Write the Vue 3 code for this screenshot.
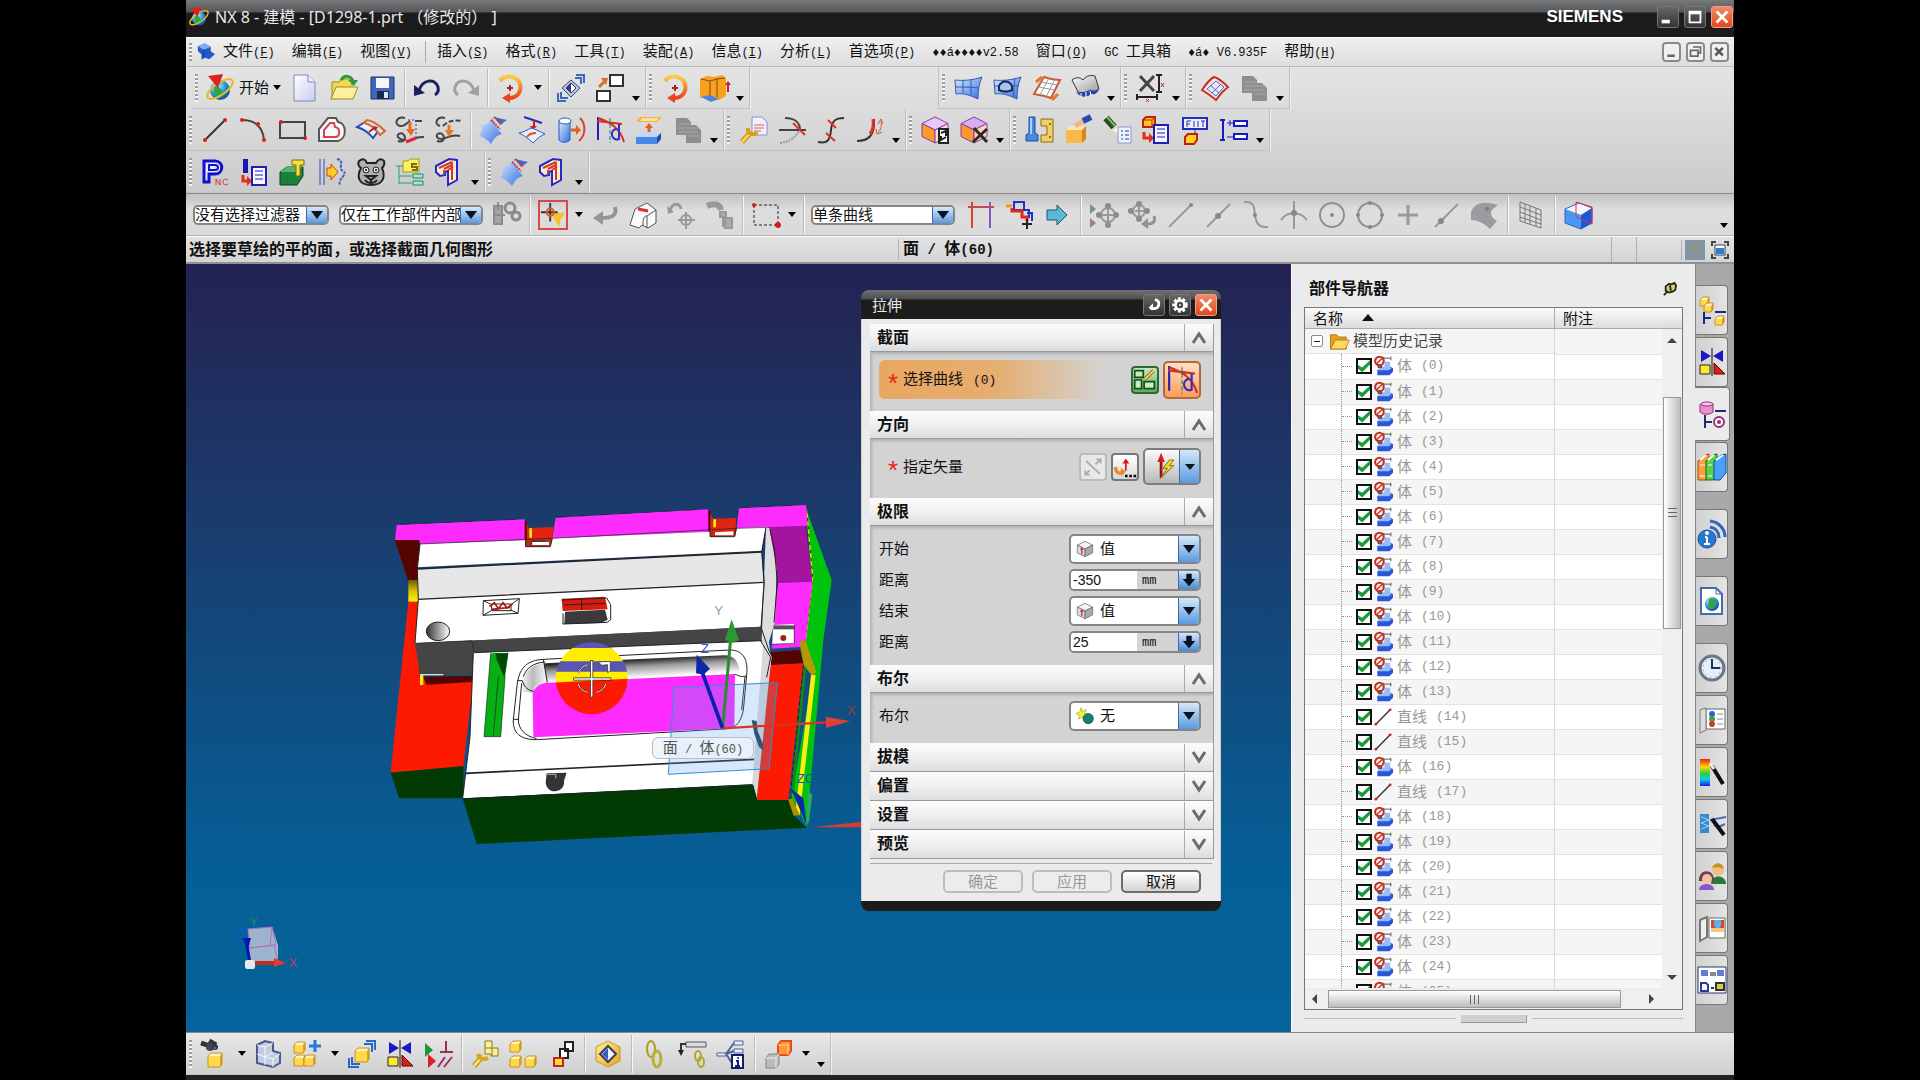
<template>
  <div class="screen">
    <svg class="defs" width="0" height="0" aria-hidden="true">
      <defs>
        <linearGradient id="gBlue" x1="0" y1="0" x2="1" y2="1"><stop offset="0" stop-color="#dcecff" /><stop offset="1" stop-color="#2f6fe0" /></linearGradient>
        <linearGradient id="gOrange" x1="0" y1="0" x2="0" y2="1"><stop offset="0" stop-color="#f8cf4a" /><stop offset="1" stop-color="#e8431c" /></linearGradient>
        <linearGradient id="gGold" x1="0" y1="0" x2="1" y2="1"><stop offset="0" stop-color="#fff0a0" /><stop offset="1" stop-color="#e8a41c" /></linearGradient>
        <linearGradient id="gGrey" x1="0" y1="0" x2="1" y2="1"><stop offset="0" stop-color="#fff" /><stop offset="1" stop-color="#9a9a9a" /></linearGradient>
        <linearGradient id="gDoc" x1="0" y1="0" x2="1" y2="1"><stop offset="0" stop-color="#fff" /><stop offset="1" stop-color="#c9cdf2" /></linearGradient>
        <linearGradient id="gRain" x1="0" y1="0" x2="0" y2="1"><stop offset="0" stop-color="#f02010" /><stop offset=".3" stop-color="#ffd800" /><stop offset=".55" stop-color="#20d040" /><stop offset=".75" stop-color="#18c8f0" /><stop offset="1" stop-color="#1020e0" /></linearGradient>
        <linearGradient id="gPocket" gradientUnits="userSpaceOnUse" x1="740" y1="495" x2="744" y2="566"><stop offset="0" stop-color="#888" /><stop offset=".2" stop-color="#222" /><stop offset=".5" stop-color="#999" /><stop offset="1" stop-color="#fff" /></linearGradient>
        <linearGradient id="gSide" x1="0" y1="0" x2="1" y2="0"><stop offset="0" stop-color="#eee" /><stop offset=".4" stop-color="#bbb" /><stop offset="1" stop-color="#fff" /></linearGradient>
        <linearGradient id="gHole" x1="0" y1="0" x2="1" y2="0"><stop offset="0" stop-color="#333" /><stop offset="1" stop-color="#fff" /></linearGradient>
        <linearGradient id="gYellow" x1="0" y1="0" x2="0" y2="1"><stop offset="0" stop-color="#6a5a00" /><stop offset=".5" stop-color="#d8c000" /><stop offset="1" stop-color="#fff200" /></linearGradient>
        <radialGradient id="gGlobe" cx=".35" cy=".3" r=".8"><stop offset="0" stop-color="#c8f6ff" /><stop offset=".5" stop-color="#2b9bd8" /><stop offset="1" stop-color="#0a3f86" /></radialGradient>
      </defs>
    </svg>

    <div class="window">
      <header class="titlebar">
        <svg class="ico20" viewBox="0 0 28 28" v-html="icons.nx"></svg>
        <h1>NX 8 - 建模 - [D1298-1.prt （修改的） ]</h1>
        <span class="brand">SIEMENS</span>
        <div class="win-btns">
          <button class="win-btn" aria-label="Minimize"><svg viewBox="0 0 22 22"><path d="M4 14h9v4H4z" fill="#fff" /></svg></button>
          <button class="win-btn" aria-label="Maximize"><svg viewBox="0 0 22 22"><path d="M4 4h14v14H4zM6 8h10v8H6z" fill="#fff" fill-rule="evenodd" /></svg></button>
          <button class="win-btn close" aria-label="Close"><svg viewBox="0 0 22 22"><path d="M5 5l12 12M17 5L5 17" stroke="#fff" stroke-width="3" /></svg></button>
        </div>
      </header>

      <nav class="menubar">
        <i class="grip"></i>
        <svg class="ico20" viewBox="0 0 28 28" v-html="icons.part"></svg>
        <ul>
          <li v-for="m in menus" :key="m.text" :class="{ 'menu-sep': m.sep }">
            <a href="#" @click.prevent><span :class="{ latin: m.mono }">{{ m.text }}</span><span v-if="m.key" class="latin">(<u>{{ m.key }}</u>)</span><span v-if="m.tail">{{ m.tail }}</span></a>
          </li>
        </ul>
        <div class="doc-btns">
          <button aria-label="Minimize document"><svg viewBox="0 0 18 18"><path d="M4 12h9v3H4z" fill="#666" /></svg></button>
          <button aria-label="Restore document"><svg viewBox="0 0 18 18"><path d="M6 3h9v7h-3M3 7h9v7H3z" fill="none" stroke="#666" stroke-width="2" /></svg></button>
          <button aria-label="Close document"><svg viewBox="0 0 18 18"><path d="M4 4l9 9M13 4l-9 9" stroke="#555" stroke-width="3" /></svg></button>
        </div>
      </nav>

      <div class="toolbars">
        <div v-for="(row, r) in rows" :key="r" class="tool-row" :class="'row' + r">
          <div v-for="(group, g) in row" :key="g" class="tool-group">
            <i class="grip"></i>
            <template v-for="(t, k) in group" :key="k">
              <i v-if="t === '|'" class="sep"></i>
              <button v-else-if="t === 'v'" class="drop" aria-label="More"></button>
              <button v-else-if="t === 'nx'" class="start"><svg viewBox="0 0 28 28" v-html="icons.nx"></svg>开始<i class="tri"></i></button>
              <button v-else class="tool" :aria-label="t"><svg viewBox="0 0 28 28" v-html="icons[t]"></svg></button>
            </template>
            <button class="drop low" aria-label="Toolbar options"></button>
          </div>
        </div>
      </div>

      <div class="selbar">
        <label class="combo c1"><select aria-label="选择过滤器"><option>没有选择过滤器</option></select><i class="arrow"></i></label>
        <label class="combo c2"><select aria-label="选择范围"><option>仅在工作部件内部</option></select><i class="arrow"></i></label>
        <template v-for="(t, k) in selection" :key="k">
          <i v-if="t === '|'" class="sep"></i>
          <button v-else-if="t === 'v'" class="drop" aria-label="More"></button>
          <label v-else-if="t === 'curve'" class="combo c2 c3"><select aria-label="曲线规则"><option>单条曲线</option></select><i class="arrow"></i></label>
          <button v-else class="tool" :class="{ on: t === 'snap' }" :aria-label="t"><svg viewBox="0 0 28 28" v-html="icons[t]"></svg></button>
        </template>
        <button class="drop low last" aria-label="Toolbar options"></button>
      </div>

      <div class="cue">
        <p class="prompt">选择要草绘的平的面，或选择截面几何图形</p>
        <p class="status">面<span class="latin"> / </span>体<span class="latin">(60)</span></p>
        <i class="cell"></i>
        <i class="cell wide"></i>
        <div class="cue-btns">
          <button aria-label="Display"><svg viewBox="0 0 20 20"><rect width="20" height="20" fill="#8394a4" /><path d="M3 5l5 3 2-3 3 4 3-3M5 11h4l3 3 3-5" stroke="#98907a" stroke-width="2" fill="none" /></svg></button>
          <button aria-label="Full screen"><svg viewBox="0 0 20 20"><path d="M2 6V2h4M14 2h4v4M18 14v4h-4M6 18H2v-4" stroke="#444" stroke-width="2" fill="none" /><rect x="5" y="5" width="10" height="10" fill="#fff" stroke="#345" /><rect x="6" y="8" width="8" height="6" fill="#2f7fd0" /></svg></button>
        </div>
      </div>

      <main class="work">
        <section class="viewport">
          <svg class="model" viewBox="0 0 1470 1110" v-html="modelArt"></svg>
          <div class="hint">面<span class="latin"> / </span>体<span class="latin">(60)</span></div>
          <svg class="triad" viewBox="0 0 64 54">
            <path d="M12 12l24-2 6 18v18H14z" fill="#b9c3d6" opacity=".85" />
            <path d="M12 12l24-2 4 18-26 3zM14 31l24-3 4 17M36 10l-2 20" fill="none" stroke="#b070b8" />
            <path d="M10 24l4 22" stroke="#0018b0" stroke-width="3" /><path d="M6 21l9 0-3 10z" fill="#0018b0" />
            <path d="M14 46h28" stroke="#c42a24" stroke-width="4" /><path d="M38 41l12 5-12 4z" fill="#e03a30" />
            <rect x="9" y="43" width="10" height="9" rx="2" fill="#e8e8e8" />
            <text x="53" y="50" font-size="12" fill="#c33c4c">X</text><text x="1" y="20" font-size="12" fill="#0a58d8">Z</text><text x="14" y="9" font-size="11" fill="#2e8a60">Y</text>
          </svg>

          <form class="dialog" @submit.prevent>
            <div class="dlg-title">
              <h2>拉伸</h2>
              <button type="button" class="win-btn" aria-label="Reset"><svg viewBox="0 0 22 22"><path d="M12 5c6 1 6 9-1 10H7" fill="none" stroke="#fff" stroke-width="3" /><path d="M5 14l5-5v8z" fill="#fff" /></svg></button>
              <button type="button" class="win-btn" aria-label="Options"><svg viewBox="0 0 22 22"><circle cx="11" cy="11" r="7" fill="none" stroke="#fff" stroke-width="3" stroke-dasharray="3 2" /><circle cx="11" cy="11" r="5" fill="none" stroke="#fff" stroke-width="3" /><circle cx="11" cy="11" r="1" fill="#fff" /></svg></button>
              <button type="button" class="win-btn close" aria-label="Close"><svg viewBox="0 0 22 22"><path d="M5 5l12 12M17 5L5 17" stroke="#fff" stroke-width="3" /></svg></button>
            </div>
            <div class="dlg-body">
              <div class="sections">
                <section v-for="s in sections" :key="s.title" :class="{ closed: !s.rows }">
                  <h3><button type="button">{{ s.title }}<span class="fold"><svg viewBox="0 0 16 14"><path :d="s.rows ? 'M2 12L8 3l6 9' : 'M2 2l6 9 6-9'" fill="none" stroke="#6c6c6c" stroke-width="3" /></svg></span></button></h3>
                  <div v-if="s.rows" class="fields">
                    <div v-for="(f, k) in s.rows" :key="k" class="field" :class="f.kind">
                      <template v-if="f.kind === 'pick'">
                        <b class="star">*</b><span class="grow">{{ f.label }}<span class="latin paren">(0)</span></span>
                        <button type="button" class="sketch" aria-label="绘制截面"><svg viewBox="0 0 28 28" v-html="icons.sketch"></svg></button>
                        <button type="button" class="curve-btn" aria-label="曲线"><svg viewBox="0 0 28 28" v-html="icons.curve3"></svg></button>
                      </template>
                      <template v-else-if="f.kind === 'vector'">
                        <b class="star">*</b><span class="grow">{{ f.label }}</span>
                        <button type="button" class="mini" aria-label="反向" disabled><svg viewBox="0 0 28 28"><path d="M6 7l16 15" stroke="#aaa" stroke-width="2" /><path d="M17 11l6-6M10 18l-5 5M18 5h5v5M5 18v5h5" fill="none" stroke="#a4aabc" stroke-width="2" /></svg></button>
                        <button type="button" class="mini dark" aria-label="矢量对话框"><svg viewBox="0 0 28 28"><path d="M15 18V8" stroke="#d01818" stroke-width="2" /><path d="M11 10l4-6 4 6z" fill="#d01818" /><path d="M3 14c0 7 4 8 8 6" fill="none" stroke="#e88a28" stroke-width="4" /><path d="M9 15l6 4-5 6z" fill="#e88a28" /><path d="M14 23h3v3h-3zM19 23h3v3h-3zM24 23h3v3h-3z" fill="#000" /></svg></button>
                        <button type="button" class="vec" aria-label="自动判断的矢量"><svg viewBox="0 0 36 36"><path d="M17 30V10" stroke="#a01010" stroke-width="3" /><path d="M13 13l4-10 4 10z" fill="#e01818" /><path d="M26 11l-7 9h5l-8 11 15-14h-5l5-6z" fill="#f4d824" stroke="#7a6a10" /></svg><i class="arrow small"></i></button>
                      </template>
                      <template v-else-if="f.kind === 'choice'">
                        <label class="grow" :for="'f' + s.title + k">{{ f.label }}</label>
                        <div class="combo big"><svg viewBox="0 0 28 28" v-html="icons[f.icon]"></svg><select :id="'f' + s.title + k"><option>{{ f.value }}</option></select><i class="arrow"></i></div>
                      </template>
                      <template v-else>
                        <label class="grow" :for="'f' + s.title + k">{{ f.label }}</label>
                        <div class="combo num"><input :id="'f' + s.title + k" :value="f.value" type="text" /><span class="unit">mm</span><button type="button" class="down" aria-label="公式"><svg viewBox="0 0 20 20"><path d="M7 3h6v6h4l-7 8-7-8h4z" fill="#08131f" /></svg></button></div>
                      </template>
                    </div>
                  </div>
                </section>
              </div>
              <div class="dlg-actions">
                <button type="button" disabled>确定</button>
                <button type="button" disabled>应用</button>
                <button type="button">取消</button>
              </div>
            </div>
          </form>
        </section>

        <aside class="navigator">
          <div class="nav-head"><h2>部件导航器</h2><svg viewBox="0 0 16 16"><path d="M1 15l4-4" stroke="#222" stroke-width="2" /><path d="M3 5l4-3 2 1 4-2 2 3-1 5-3 2-4 1-4-2z" fill="#d8d060" stroke="#222" stroke-width="2" /><path d="M8 4l1 6" stroke="#222" stroke-width="2" /></svg></div>
          <div class="tree-frame">
            <div class="tree-top">
              <div class="tree-clip">
                <table>
                  <thead><tr><th class="name">名称<i class="sort"></i></th><th>附注</th></tr></thead>
                  <tbody>
                    <tr><td class="root"><button class="minus" aria-label="Collapse"></button><svg class="folder" viewBox="0 0 28 28" v-html="icons.folder"></svg>模型历史记录</td><td></td></tr>
                    <tr v-for="n in nodes" :key="n.id">
                      <td><label class="node"><input type="checkbox" checked /><svg viewBox="0 0 28 28" v-html="n.line ? icons.line : icons.body"></svg>{{ n.line ? '直线' : '体' }}<span class="latin">({{ n.id }})</span></label></td>
                      <td></td>
                    </tr>
                  </tbody>
                </table>
              </div>
              <div class="vscroll"><i class="cap"></i><i class="up"></i><i class="thumb"></i><i class="dn"></i></div>
            </div>
            <div class="hscroll"><i class="lf"></i><i class="thumb"></i><i class="rt"></i></div>
          </div>
          <div class="splitter"><i></i></div>
        </aside>

        <div class="tabs">
          <button v-for="t in tabs" :key="t.icon" :class="{ active: t.active, gap: t.gap }" :aria-label="t.icon"><svg viewBox="0 0 28 28" v-html="icons[t.icon]"></svg></button>
        </div>
      </main>

      <footer class="bottombar">
        <div class="tool-group">
          <i class="grip"></i>
          <template v-for="(t, k) in assembly" :key="k">
            <i v-if="t === '|'" class="sep"></i>
            <button v-else-if="t === 'v'" class="drop" aria-label="More"></button>
            <button v-else class="tool" :aria-label="t"><svg viewBox="0 0 28 28" v-html="icons[t]"></svg></button>
          </template>
          <button class="drop low" aria-label="Toolbar options"></button>
        </div>
      </footer>
    </div>
  </div>
</template>

<script setup>
const p = (d, stroke, w = 2, fill = 'none') => `<path d="${d}" fill="${fill}" stroke="${stroke}" stroke-width="${w}"/>`
const f = (d, fill) => `<path d="${d}" fill="${fill}"/>`
const dot = (x, y, fill = '#d02020', r = 2) => `<circle cx="${x}" cy="${y}" r="${r}" fill="${fill}"/>`
const dash = (d, stroke, w, pattern) => `<path d="${d}" fill="none" stroke="${stroke}" stroke-width="${w}" stroke-dasharray="${pattern}"/>`

// isometric cube, s = half width
const cube = (x, y, s, top = '#fff0a0', left = '#ffd84a', right = '#e0a018', line = '#b07c10') => {
  const h = s / 2
  return `<g stroke="${line}" stroke-width="1" stroke-linejoin="round">` +
    f(`M${x} ${y - s}l${s} ${h}l${-s} ${h}l${-s} ${-h}z`, top) +
    f(`M${x - s} ${y - h}l${s} ${h}v${s}l${-s} ${-h}z`, left) +
    f(`M${x + s} ${y - h}l${-s} ${h}v${s}l${s} ${-h}z`, right) + '</g>'
}

// small gold block used by the assembly icons
const block = (x, y, s = 8) =>
  f(`M${x} ${y + 3}l3-3h${s}l-2 3z`, '#fff4b8') + f(`M${x} ${y + 3}h${s + 1}v${s}h${-s - 1}z`, '#ffd850') +
  f(`M${x + s + 1} ${y + 3}l2-3v${s}l-2 3z`, '#e0a018') + p(`M${x} ${y + 3}l3-3h${s}v${s}l-2 3h${-s - 1}z`, '#c89020', 1)

const sheet = f('M15 1l13 3-7 5z', '#3a6ed0') + f('M2 9c5 0 9-3 12-8 2 8 5 13 9 17-5 1-8 4-11 10C9 24 4 21 0 20c3-4 3-7 2-11z', 'url(#gBlue)') + dash('M12 4l9 9M15 1l8 7', '#d83030', 2, '2 1')
const bracket = p('M1 8L14 1l8 1v20l-9 5V13l-3 1v3l-5 1-4-4z', '#2828c8', 2, '#f8ecd0') + p('M4 10l13-6M17 4v18M9 11l8-4M13 12l5-3M9 12v4', '#d83828', 2)
const rotate = p('M4 7C9 0 21 1 24 10c2 8-3 14-11 14', 'url(#gOrange)', 4) + f('M6 24l8-5v10z', '#e8431c') + p('M14 11v6M11 14h6', '#b02020', 2)
const mirror = f('M3 2l10 6-10 6zM25 2L15 8l10 6z', '#1818c8') + p('M14 0v28', '#111', 1) + p('M2 17h10v9H2z', '#222', 1, '#ffe830') + p('M16 26V15l11 11z', '#600', 1, '#d82018')
const page = (c = '#2020b0') => p('M12 9h14v18H12z', c, 2, '#f4f6ff') + p('M15 13h8M15 17h8M15 21h8', c, 1)
const pocketGrey = '#8c8c8c'

const icons = {
  nx: `<circle cx="14" cy="16" r="10" fill="url(#gGlobe)"/>` + f('M8 12c5 0 9 3 8 8s-5 5-8 1z', '#2aa84a') + `<ellipse cx="14" cy="15" rx="15" ry="6" transform="rotate(-35 14 15)" fill="none" stroke="#e8b82c" stroke-width="2"/>` + f('M2 2l15-2-5 14z', '#e02020'),
  part: f('M4 6l10-4 8 5v6l6 4-8 7-6-2-5 3V17l-5-4z', '#2458c8') + f('M4 6l10-4 8 5-10 4z', '#78b0f8') + p('M12 11v10', '#123080', 1),
  doc: p('M3 1h14l7 7v19H3z', '#8088b8', 1, 'url(#gDoc)') + p('M17 1v7h7', '#8088b8', 1, '#eef'),
  open: p('M2 25V8h7l3-3h10v7', '#a08818', 1, '#f0d850') + p('M1 25l5-12h22l-5 12z', '#a08818', 1, '#fbf0a0') + p('M11 6c4-6 10-4 12 1', '#2a9a3a', 3) + f('M18 6h10l-4 6z', '#2a9a3a'),
  save: p('M2 3h23v22H2z', '#183470', 1, '#4068b8') + f('M7 4h13v10H7z', '#f4f6fa') + f('M8 17h12v8H8z', '#1a2850') + f('M15 18h4v6h-4z', '#dfe6f4'),
  undo: p('M6 17C9 5 22 4 25 13c1 4 0 6-3 8', '#1c2060', 3) + f('M1 11v11l11-3z', '#1c2060'),
  redo: p('M22 17C19 5 6 4 3 13c-1 4 0 6 3 8', '#a0a0a0', 3) + f('M27 11v11l-11-3z', '#a0a0a0'),
  rotate,
  fit: p('M5 14l9-8 9 8-9 9z', '#334a80', 1, '#b8c4e0') + p('M9 14l5-5 5 5-5 5z', '#223060', 1, '#fff') + f('M14 9v10l-5-5z', '#3a3a80') + p('M19 1h8v8M18 4h6v6', '#3a6ac0', 2) + p('M9 27H1v-8M11 24H4v-6', '#3a6ac0', 2),
  layout: p('M14 1h13v11H14zM1 17h13v10H1z', '#333', 2, '#fff') + p('M3 13l5-5', '#e06a20', 3) + f('M5 4h7l-2 7z', '#e06a20'),
  extrude: f('M0 5l7-3 7 1 8-2 4 3v18l-7 4-8-3-11 1z', '#f8a020') + p('M1 5l9 2v16M10 7l7-2v18M17 5l8-1', '#8a4a00', 1) + f('M1 23l9-2 9 4-8 3z', '#5080e0') + p('M28 18V10', '#c82020', 2) + f('M25 11l3-4 3 4z', '#c82020'),
  mesh: p('M1 6c9 1 18 0 27-3-3 7-4 13-4 22C16 21 9 19 2 20z', '#3858b8', 1, 'url(#gBlue)') + p('M1 13c9 0 17 0 24 1M9 6v13M17 5v16', '#3858b8', 1),
  mesh2: p('M1 6c9 1 18 0 27-3-3 7-4 13-4 22C16 21 9 19 2 20z', '#3858b8', 1, 'url(#gBlue)') + p('M1 12h25M22 4l-2 19', '#3858b8', 1) + p('M6 16v-4c3-6 10-6 13 0v4c-4 2-9 2-13 0z', '#16305c', 2, '#a8c4f0'),
  ruled: p('M2 20L12 3c6 2 10 3 16 3l-9 18C13 22 8 21 2 20z', '#c85838', 2, '#fff') + p('M6 13l17 3M9 8l16 3M8 21l9-17M14 23l9-18', '#999', 1) + p('M4 8l6-5M20 26l6-6', '#e07828', 3),
  sew: p('M1 6c4-3 8-3 11 0 4-5 8-5 12-4l4 13c-3 2-6 3-9 1-4 3-8 3-12 2z', '#333', 1, 'url(#gGrey)') + f('M5 18c6 2 10 1 14-2 3 2 6 1 9-1-1 4-4 6-8 5-4 4-10 4-15-2z', '#2444c0') + p('M10 19v4M15 18v6M19 17l1 5', '#fff', 1),
  measure: p('M4 2l14 15M18 2L4 17', '#444', 3) + p('M23 1v17M20 1h6M20 18h6M1 23h20M1 20v6M21 20v6', '#222', 2) + p('M25 9l3 4M28 9l-3 4M10 25l3 3M13 25l-3 3', '#c03030', 1),
  curvenet: p('M1 16C5 10 9 5 13 3c5 1 9 5 14 10-4 3-8 7-12 13C10 22 6 19 1 16z', '#c03028', 2, '#ffe0dc') + p('M6 15l9-8 8 6-8 9zM9 11l9 8M11 19l8-8', '#5068c8', 1, '#e4e8ff'),
  union: f('M2 2h11l4 4v13H2zM12 9h10l5 5v13H12z', '#8e8e8e') + p('M4 8h12M4 12h20M4 16h20M14 20h12', '#a8a8a8', 1),
  line: p('M4 24L24 4', '#333', 2) + dot(4, 24) + dot(24, 4),
  arc: p('M2 4c14 0 21 8 22 20', '#444', 2) + dot(2, 4) + dot(18, 8) + dot(24, 24),
  rect: p('M1 6h25v16H1z', '#444', 2) + dot(2, 6) + dot(26, 22),
  offset: p('M1 25V13l9-11h8l2 4c9 1 9 17 0 19z', '#555', 2, '#fafafa') + p('M6 21v-7l6-7h4l1 4c6 1 5 9 1 10z', '#d84050', 2),
  offset2: p('M0 11l8-5c7 1 12 5 14 8l-6 8c-4-5-9-9-16-11z', '#2848b8', 2, '#e8f2ff') + p('M10 4c7 1 12 5 18 11l-5 4C18 12 13 8 7 7z', '#d86828', 2, '#cfe0fa') + p('M12 16l5-4', '#c02020', 2) + f('M16 10l5 1-3 4z', '#c02020'),
  bridge: p('M9 2C1 0-3 8 4 10c4 1 7-3 10-5M26 5h-7M2 25c7 2 8-3 6-6-3-4-9 0-5 3 2 2 5 2 7 1M20 22c3-1 5-1 8-1', '#444', 2) + p('M10 26l10-4', '#e02828', 3) + dash('M12 4h8v18', '#3838c8', 1, '2 2') + f('M10 13h9l-4 7z', '#e86820') + p('M14 6v9', '#e86820', 3),
  bridge2: p('M10 2c-8-2-12 6-5 8M2 25c7 2 8-3 6-6-3-4-9 0-5 3 4 4 12-5 22-2', '#444', 2) + dash('M8 10c6-6 12-6 19-5', '#444', 2, '5 2') + f('M10 14h9l-5 7z', '#e87820') + p('M14 9v6', '#e87820', 3),
  sheet,
  project: p('M6 1l18 6', '#2828c0', 2) + p('M16 4v8', '#c02020', 2) + f('M12 10h7l-4 4z', '#c02020') + p('M1 17c5-1 8-3 12-5 5 1 9 4 14 6-5 2-8 5-12 9-4-4-8-7-14-10z', '#3060b8', 1, '#e4eefc') + p('M9 21c2-3 5-4 9-4', '#e05020', 2),
  cyl: p('M2 5h11v19c-3 3-8 3-11 0z', '#2858c0', 1, 'url(#gBlue)') + `<ellipse cx="8" cy="5" rx="6" ry="3" fill="#fff" stroke="#2858c0"/>` + p('M14 14h6', '#e06020', 3) + f('M19 9l5 5-5 5z', '#e06020') + p('M23 2c6 6 6 17-1 23', '#d84030', 2),
  curve3: p('M2 1v23', '#2020b8', 2) + p('M1 5l25 3M2 2c12 4 22 10 26 24', '#d03028', 2) + dash('M14 2v25', '#108868', 1, '4 2') + p('M23 8v15c-8 3-10-10-2-10', '#3030c0', 2),
  boss: f('M5 1h22l-5 5H1z', '#f0b838') + f('M7 2h17l-3 3H5z', '#fbe0a0') + p('M14 16v-5', '#e06020', 3) + f('M10 12l4-5 4 5z', '#e06020') + f('M1 21l6-4h19l-4 4z', '#bcd8ff') + f('M1 21h21v7H1z', '#4888e8') + f('M22 21l4-4v6l-4 5z', '#1c4ca8'),
  wrench: p('M13 1h10l5 5v13H13z', '#8890c8', 1, '#f0f0fa') + p('M15 9h10M15 12h10M15 15h7', '#e05858', 1) + p('M3 26l9-10', '#b88a10', 5) + p('M3 26l9-10', '#ffd840', 3) + p('M9 12c-1 6 6 8 9 4', '#d8a010', 4),
  trim: p('M1 14h27M7 2c10 0 15 5 15 12', '#444', 2) + dash('M2 27c9-1 15-5 19-12', '#999', 2, '2 1') + p('M15 7l12 12', '#e03030', 2),
  sCurve: p('M1 26c10 2 12-2 13-12 1-9 4-12 13-12', '#333', 2) + p('M11 4l8 8M9 17l9 8', '#e03030', 2),
  stretch: p('M1 25c12 0 18-6 17-22', '#333', 2) + p('M17 3c1 7 0 11-3 15', '#e03030', 3) + p('M25 5c1 5 0 9-3 11M22 8l3-5 2 5M20 13l1 5 5-2', '#d05838', 1),
  cubeDown: cube(14, 14, 13, '#e8c8f8', '#ff9a28', '#ffe0c0', '#8a38b0') + p('M18 13h9v14H18z', '#222', 2, '#fff') + p('M20 17l5-2v5M25 21l-5 3v-4', '#222', 2),
  cubeX: cube(14, 14, 13, '#d8b0f0', '#ff9a28', '#ffd8a8', '#8a38b0') + p('M14 12l13 14M27 13L13 26', '#2a2a2a', 3),
  bolt: p('M4 1h6v16l3 2v6H1v-6l3-2z', '#1848a0', 1, '#4888e0') + f('M5 2h2v16H5z', '#b0d0ff') + p('M16 3h12v23H16v-7h6v-9h-6z', '#8a6a10', 1, '#f0d060') + dot(25, 8, '#6a5010', 1) + dot(25, 21, '#6a5010', 1),
  handbox: f('M2 14l5-4h15l-4 4z', '#ffe8b0') + f('M2 14h16v13H2z', '#fbb848') + f('M18 14l4-4v13l-4 4z', '#d88818') + p('M11 10l10-6', '#f0b890', 5) + p('M19 5l8-4', '#2848b8', 6),
  light: p('M3 2l8 9', '#2a4a20', 7) + p('M4 1l8 9', '#7ac050', 2) + f('M10 14l7-4-1 9z', '#fffbd0') + p('M15 11h13v16H15z', '#8a98c8', 1, '#eef2ff') + p('M18 15h2M18 19h2M18 23h2M22 15h4M22 19h4M22 23h4', '#8a98c8', 2),
  boxlist: p('M1 4l3-3h9v7l-3 3H1z', '#c02010', 2, '#ffc820') + p('M1 4h9v7M10 4l3-3', '#c02010', 1) + p('M2 16v6h7', '#e03018', 3) + f('M7 17l5 5-5 5z', '#e03018') + page(),
  pin: `<rect x="2" y="2" width="24" height="11" fill="#eef" stroke="#2030b8" stroke-width="2"/>` + p('M6 11V5h4M6 8h3M13 5v6M17 5v6M20 5h4M22 5v6', '#2030b8', 1) + p('M14 13v6', '#2030b8', 1) + p('M4 21l3-3h9v6l-3 4H4z', '#c02010', 2, '#ffd020'),
  params: p('M0 4h5M0 24h5M3 4v20', '#1818c8', 2) + p('M7 7h6M10 4v6M7 21h6', '#1818c8', 1) + p('M14 5h13v5H14zM14 18h13v5H14z', '#1818c8', 2, '#fff'),
  pnc: p('M3 24V3h11c9 0 9 13 0 13H8v8z', '#1010d0', 3, '#e8e8f8') + p('M8 7h6c4 0 4 5 0 5H8z', '#1010d0', 2) + p('M15 27v-6l4 6v-6M27 22c-4-2-5 0-5 2s1 4 5 2', '#d83020', 1),
  down: f('M3 1h5v14H3z', '#1818b8') + p('M3 17v6h6', '#e03018', 3) + f('M7 18l5 5-5 5z', '#e03018') + page(),
  mill: p('M1 14l7-5h16v9l-6 9H1z', '#0a4020', 1, '#188038') + f('M1 14l7-5h15l-5 5z', '#50b868') + p('M13 2h12v5h-4v11h-4V7h-4z', '#7a6810', 1, '#f8e038'),
  flow: p('M2 1v26M6 1v26', '#3048c8', 1) + p('M9 10h4V6l7 8-7 8v-4H9z', '#c84010', 1, '#ffd020') + dash('M19 1c9 2 0 9 6 12s-6 8-3 14', '#4060c0', 2, '3 1'),
  bear: p('M2 3c4-3 6-2 8 2h9c2-4 5-5 8-2 1 3 0 5-2 7 4 9 1 17-11 17S-1 19 4 10C1 8 1 5 2 3z', '#222', 2, '#b0b0b0') + p('M9 18h10l-5 4zM14 21v3M8 22c3 4 9 4 12 0', '#222', 2) + `<circle cx="9" cy="12" r="3" fill="#ddd" stroke="#222"/><circle cx="19" cy="12" r="3" fill="#ddd" stroke="#222"/>` + dot(9, 12, '#111', 1) + dot(19, 12, '#111', 1),
  tree: p('M7 3h5l2-2h9v13H7z', '#a89818', 1, '#fbf060') + p('M21 6h-5v3h5v3h-5', '#806a10', 2) + p('M0 8h7M3 8v18M3 18h13M3 25h13', '#28a070', 1) + p('M17 16h10v4H17zM17 23h10v4H17z', '#1a8a60', 1, '#a8e8c8'),
  bracket,
  chainGrey: p('M2 5h8v18H2zM1 14h12M6 1v8', pocketGrey, 2, '#a4a4a4') + `<circle cx="18" cy="7" r="5" fill="none" stroke="#8c8c8c" stroke-width="3"/><circle cx="24" cy="15" r="4" fill="none" stroke="#8c8c8c" stroke-width="3"/>`,
  snap: f('M12 13l15-2-5 8-1 8-4-6z', '#f8c028') + p('M11 1v20M1 11h18', '#333', 2) + `<circle cx="11" cy="11" r="4" fill="none" stroke="#e05820" stroke-width="2"/>`,
  back: p('M24 6c2 8-2 11-14 11', '#909890', 4) + f('M2 17l10-7v14z', '#909890'),
  face: p('M1 24L6 8l12-6 9 7v13l-8 5-6-3-3 3z', '#555', 1, '#fafafa') + p('M18 27V15l9-6M14 24c0-7 1-9 4-9', '#555', 1) + p('M9 8l10 2', '#e03030', 3),
  orient: p('M3 9c3-8 10-7 11-1', '#999', 3) + f('M0 5l1 8 6-2z', '#999') + `<circle cx="19" cy="19" r="5" fill="none" stroke="#999" stroke-width="2"/>` + p('M19 11v17M11 19h17', '#999', 2),
  ctrl: p('M2 5c8-4 13-1 14 4', '#999', 6) + p('M15 11h6v5h-6zM20 17h7v10h-7zM18 16v9h3', '#999', 2, '#aaa'),
  marquee: `<rect x="2" y="4" width="24" height="20" fill="none" stroke="#222" stroke-width="1" stroke-dasharray="3 2"/>` + dot(2, 4, '#d02020', 2) + dot(26, 24, '#d02020', 3),
  hash: p('M5 1v26', '#e04028', 2) + p('M23 1v26', '#8058c0', 2) + p('M1 6h26', '#c04858', 2),
  follow: p('M1 5h6', '#f09828', 3) + p('M9 1h10v8H9zM16 9h8v7h-8M22 12h5v8', '#2030d0', 2) + p('M7 7v3h10v6h5v4', '#e02818', 3) + p('M22 18v10M17 23h10', '#222', 2),
  goArrow: p('M4 9h10V4l10 10-10 10v-5H4z', '#28506a', 1, '#58b8d8'),
  ptMove: f('M0 3l6 5-6 5z', '#7a9484') + f('M0 17l6 5-6 5z', '#a87a88') + `<circle cx="18" cy="14" r="7" fill="none" stroke="#999" stroke-width="2"/>` + p('M18 8v12M12 14h12', '#999', 2) + dot(18, 5, '#8c8c8c', 3) + dot(18, 24, '#8c8c8c', 3) + dot(9, 14, '#8c8c8c', 3) + dot(26, 14, '#8c8c8c', 3),
  ptRot: `<circle cx="11" cy="10" r="6" fill="none" stroke="#999" stroke-width="2"/>` + p('M11 6v9M7 10h9', '#999', 2) + dot(11, 3, '#8c8c8c', 3) + dot(11, 18, '#8c8c8c', 3) + dot(3, 10, '#8c8c8c', 3) + dot(19, 10, '#8c8c8c', 3) + p('M26 15c2 6-1 8-7 8', '#8c9690', 3) + f('M20 17v11l-7-5z', '#8c9690'),
  gLine: p('M3 26L26 3', '#999', 2) + dot(25, 4, '#888'),
  gMid: p('M3 26L26 3', '#999', 2) + dot(14, 15, '#888', 3),
  gCurve: p('M2 1c11-1 10 6 11 13s3 13 13 12', '#999', 2) + dot(13, 14, '#888'),
  gCross: p('M14 0v28M1 19c6-9 19-9 26 0', '#999', 2) + dot(14, 12, '#888', 3),
  gCenter: `<circle cx="14" cy="14" r="12" fill="none" stroke="#909090" stroke-width="2"/>` + dot(14, 14, '#888'),
  gQuad: `<circle cx="14" cy="14" r="12" fill="none" stroke="#909090" stroke-width="2"/>` + dot(14, 2, '#888') + dot(14, 26, '#888') + dot(2, 14, '#888') + dot(26, 14, '#888'),
  gPlus: p('M14 4v20M4 14h20', '#999', 3),
  gOn: p('M3 26L26 3', '#999', 2) + dot(9, 20, '#888', 3),
  gFace: f('M1 11C5 1 14 0 28 4c-4 3-7 5-7 8 0 4 3 6 6 8l-7 8C14 22 7 19 1 19z', '#9a9ca2') + dot(17, 8, '#7c7c84'),
  gGrid: p('M3 1l21 8v18L3 20zM3 6l21 8M3 11l21 8M3 16l21 7M8 3v19M13 5v18M19 7v18', '#777', 1),
  wcs: f('M1 8l14-6 13 5-11 7z', '#f4f6fc') + f('M1 8l16 6v14L1 22z', '#4898f8') + f('M28 7l-11 7v14l11-6z', '#1858d8') + p('M1 8l14-6 13 5v15l-11 6-16-6z', '#3060c0', 1) + p('M12 1v15l16 7M12 1l16 5v17', '#e03050', 1),
  // dialog
  sketch: p('M2 3h10v8H2zM2 14h8v10H2zM13 16h12v8H13z', '#14501c', 2, '#c8ecc0') + p('M14 13L24 3', '#a05810', 4) + p('M14 13L24 3', '#ffd860', 2),
  value: cube(14, 14, 12, '#f2f2f2', '#dcdcdc', '#a8a8b0', '#556') + p('M9 14v8', '#d02828', 2) + f('M6 15l3-4 3 4z', '#d02828'),
  none: p('M8 1l2 6 6-3-3 6 6 2-6 2 1 6-5-4-5 3 1-6-5-3 6-2z', '#a8a010', 1, '#f8f040') + `<circle cx="19" cy="18" r="8" fill="#148078" stroke="#083c38"/>`,
  // part navigator
  folder: p('M2 24V5h8l3 3h10v16z', '#a06808', 1, '#e8a020') + p('M2 24l6-12h19l-5 12z', '#a06808', 1, '#ffd860'),
  body: f('M6 20l6-5h13l3 2v5l-5 5H6z', '#2858d8') + f('M6 20h16l5-4h-3V8h-8v7h-4z', '#98bcf8') + p('M15 1v5M25 1v5M15 3h10', '#222', 1) + p('M7 12h5v4H7z', '#222', 1, '#777') + `<circle cx="9" cy="7" r="6" fill="none" stroke="#c83020" stroke-width="3"/>` + p('M5 11l8-8', '#c83020', 2),
  tabAsm: block(2, 1, 6) + block(6, 7, 6) + block(17, 20, 6) + p('M17 16h11M6 16v12M6 22h7', '#1a2a78', 2),
  mirror,
  tabPart: p('M2 4v8c3 3 10 3 13 0V4', '#a02878', 1, '#e890d0') + `<ellipse cx="9" cy="4" rx="6" ry="2" fill="#f8c8ec" stroke="#a02878"/><circle cx="21" cy="22" r="5" fill="#fff" stroke="#983070" stroke-width="2"/>` + dot(21, 22, '#983070', 2) + p('M17 11h11M7 15v13M7 22h7', '#222a70', 2),
  tabLib: p('M0 8l7-6 4-1v22l-3 4H0z', '#a84808', 1, '#f8a040') + p('M8 8l7-6 4-1v21l-4 5H8z', '#186818', 1, '#58d048') + p('M16 8l7-6 5-1v19l-6 7h-6z', '#1048a0', 1, '#48a0f8') + p('M2 7l6-5M10 7l6-5M18 7l7-5', '#fff', 2) + p('M2 12h5M10 12h4M2 23h5M10 23h4', '#fff', 1),
  tabInfo: `<circle cx="9" cy="19" r="9" fill="#2878d0" stroke="#1850a0"/>` + p('M9 17v7M6 24h6M7 17h2', '#fff', 2) + dot(9, 13, '#fff') + p('M12 7c6 1 9 5 9 11M12 1c9 1 15 8 15 16', '#3868b8', 3),
  tabWeb: p('M3 1h15l6 6v20H3z', '#4868b0', 2, '#fff') + p('M18 1v6h6', '#4868b0', 1) + `<circle cx="14" cy="17" r="7" fill="url(#gGlobe)"/>` + f('M11 12c6-2 8 2 6 5s0 5-3 5-2-3-4-4z', '#38a038'),
  tabClock: `<circle cx="14" cy="14" r="12" fill="#e8eef8" stroke="#6c7488" stroke-width="3"/>` + `<circle cx="14" cy="14" r="9" fill="none" stroke="#6a7080" stroke-dasharray="1 4"/>` + p('M14 5v9h8', '#203060', 2),
  tabRoles: p('M8 3h19v20H8z', '#666', 1, '#fff') + p('M2 4l6-2v22l-6 3z', '#777', 1, '#ddd') + dot(14, 8, '#2868c8', 3) + dot(14, 13, '#38a838', 3) + dot(14, 18, '#d83828', 3) + p('M19 8h6M19 13h6M19 18h6', '#888', 1),
  tabColor: f('M2 1h10v27H2z', 'url(#gRain)') + p('M14 8l11 18', '#111', 4) + p('M12 5l4 6', '#eee', 3),
  tabMat: f('M2 4h9v19H2z', '#3888d0') + p('M3 7l8 3-8 3 8 3-8 3', '#a0d0f8', 1) + p('M12 10l16-3M16 15c4 3 7 1 11-1', '#4870b8', 2) + p('M14 9l12 16', '#111', 4),
  tabPeople: dot(20, 8, '#f0c088', 6) + f('M14 6c2-7 11-6 12 1-4-2-8-2-12-1z', '#c89020') + f('M13 22c0-10 15-10 15 0z', '#287838') + f('M1 19c-1-13 16-13 15 0z', '#704058') + dot(9, 17, '#f0c0a0', 5) + f('M1 28c0-8 15-8 15 0z', '#8858c8'),
  tabDoor: p('M11 4h16v20H11z', '#666', 1, '#fff') + p('M2 6l7-3v20l-7 4z', '#777', 2, '#eee') + f('M13 6h13v12H13z', '#d84828') + f('M16 6h7v6l-3 4-4-4z', '#58b0f0') + f('M13 14h13v4H13z', '#f8c878'),
  tabFlow: p('M0 1h28v26H0z', '#203868', 1, '#fff') + f('M3 4h7v6H3zM19 4h7v6h-7z', '#6878d8') + p('M12 7h6M12 9h6', '#111', 1) + p('M3 17h5l2 2v6H3z', '#2838a8', 2, '#fff') + p('M13 22h3M18 17h8v7h-8z', '#333', 2, '#d8c850'),
  // assembly bar
  find: p('M1 3l9 3M9 1l7 4', '#333', 5) + dot(10, 7, '#445', 4) + dot(15, 7, '#334', 3) + dot(15, 8, '#5a7ad0', 1) + block(8, 13, 11),
  cubes: p('M2 5l8-4 8 2v8l7 2v10l-7 4-16-4z', '#485890', 2, '#c4cce0') + p('M2 5l8 2v10M10 7l8-4M10 17l8 2v8M10 17l8-5M2 14l8 3v8M18 19l7-5', '#f8f8ff', 1),
  addComp: block(1, 2) + block(1, 15) + block(11, 15) + p('M22 0v12M16 6h12', '#2878d8', 3),
  moveComp: block(7, 8, 11) + p('M18 1h9v9M16 4h8v8', '#2868c8', 2) + p('M11 27H1v-9M12 24H4v-7', '#2868c8', 2),
  constrain: f('M1 3l8 7-8 7z', '#189838') + f('M4 14l8 7-8 7z', '#d82020') + p('M22 1v11M16 12h13', '#983060', 2) + p('M14 27l7-10M20 27l8-10', '#983060', 2),
  wave: p('M14 1h7v7h6v8h-7v-2h-6z', '#907810', 1, '#f8f0a0') + p('M14 8h7v8', '#907810', 1) + p('M3 26l9-10', '#a88410', 5) + p('M3 26l9-10', '#ffe060', 3) + p('M7 14c1 5 6 6 10 4', '#d8a818', 4),
  three: block(1, 1) + block(1, 16) + block(16, 16),
  chain3: p('M18 2h8v9h-8zM13 9h8v9h-8z', '#222', 2, '#fff') + p('M7 18h9v8H7z', '#d02010', 2, '#ffe040'),
  hex: p('M14 1l12 6v14l-12 6-12-6V7z', '#c89818', 1, 'url(#gGold)') + p('M14 6l8 8-8 8-8-8z', '#383870', 2, '#eef4ff') + f('M14 8v12l-6-6z', '#3860b0'),
  link: `<ellipse cx="10" cy="9" rx="4" ry="8" fill="none" stroke="#a8a020" stroke-width="2"/><ellipse cx="16" cy="19" rx="4" ry="8" fill="none" stroke="#b8b030" stroke-width="3"/>`,
  linkPipe: p('M7 2h20v5H7z', '#555', 1, '#ddd') + p('M7 4H2v8', '#333', 2) + f('M-1 10h6l-3 6z', '#222') + `<ellipse cx="19" cy="16" rx="3" ry="5" fill="none" stroke="#b0a828" stroke-width="2"/><ellipse cx="22" cy="22" rx="3" ry="5" fill="none" stroke="#b0a828" stroke-width="2"/>`,
  branch: p('M0 13h9v3H0zM17 1h9v4h-9zM17 9h9v4h-9z', '#506090', 1, '#e8ecff') + p('M9 14l8-11M9 14l8-3M9 14l6 9', '#506090', 2) + p('M15 15h11v13H15z', '#102060', 2, '#fff') + p('M18 26h5M21 26v-5h-2', '#102090', 2) + dot(21, 18, '#102090', 1),
  explode: p('M14 5l3-4h10v10l-3 4H14z', '#e05018', 2, '#ff9838') + p('M14 5h10v10', '#ffd0a0', 1) + p('M2 18l3-4h10v10l-3 4H2z', '#888', 1, '#bbb') + p('M2 18h10v10M12 18l3-4', '#eee', 1)
}

const menus = [
  { text: '文件', key: 'F' }, { text: '编辑', key: 'E' }, { text: '视图', key: 'V' },
  { text: '插入', key: 'S', sep: true }, { text: '格式', key: 'R' }, { text: '工具', key: 'T' },
  { text: '装配', key: 'A' }, { text: '信息', key: 'I' }, { text: '分析', key: 'L' },
  { text: '首选项', key: 'P' }, { text: '♦♦á♦♦♦♦v2.58', mono: true }, { text: '窗口', key: 'O' },
  { text: 'GC ', mono: true, tail: '工具箱' }, { text: '♦á♦ V6.935F', mono: true }, { text: '帮助', key: 'H' }
]

const rows = [
  [
    ['nx', 'doc', 'open', 'save', '|', 'undo', 'redo', '|', 'rotate', 'v', '|', 'fit', 'layout'],
    ['rotate', 'extrude'],
    ['mesh', 'mesh2', 'ruled', 'sew'],
    ['measure'],
    ['curvenet', 'union']
  ],
  [
    ['line', 'arc', 'rect', 'offset', 'offset2', 'bridge', 'bridge2', '|', 'sheet', 'project', 'cyl', 'curve3', 'boss', 'union'],
    ['wrench', 'trim', 'sCurve', 'stretch'],
    ['cubeDown', 'cubeX'],
    ['bolt', 'handbox', 'light', 'boxlist', 'pin', 'params']
  ],
  [
    ['pnc', 'down', 'mill', 'flow', 'bear', 'tree', 'bracket'],
    ['sheet', 'bracket']
  ]
]

const selection = ['chainGrey', '|', 'snap', 'v', 'back', 'face', 'orient', 'ctrl', '|', 'marquee', 'v', '|', 'curve', 'hash', 'follow', 'goArrow', '|',
  'ptMove', 'ptRot', 'gLine', 'gMid', 'gCurve', 'gCross', 'gCenter', 'gQuad', 'gPlus', 'gOn', 'gFace', '|', 'gGrid', '|', 'wcs']

const assembly = ['find', 'v', 'cubes', 'addComp', 'v', 'moveComp', 'mirror', 'constrain', '|', 'wave', 'three', 'chain3', '|', 'hex', '|', 'link', 'linkPipe', 'branch', '|', 'explode', 'v']

const sections = [
  { title: '截面', rows: [{ kind: 'pick', label: '选择曲线' }] },
  { title: '方向', rows: [{ kind: 'vector', label: '指定矢量' }] },
  {
    title: '极限',
    rows: [
      { kind: 'choice', label: '开始', icon: 'value', value: '值' },
      { kind: 'number', label: '距离', value: '-350' },
      { kind: 'choice', label: '结束', icon: 'value', value: '值' },
      { kind: 'number', label: '距离', value: '25' }
    ]
  },
  { title: '布尔', rows: [{ kind: 'choice', label: '布尔', icon: 'none', value: '无' }] },
  { title: '拔模' }, { title: '偏置' }, { title: '设置' }, { title: '预览' }
]

const lineIds = [14, 15, 17]
const nodes = Array.from({ length: 26 }, (_, id) => ({ id, line: lineIds.includes(id) }))

const tabs = [
  { icon: 'tabAsm' }, { icon: 'mirror' }, { icon: 'tabPart', active: true }, { icon: 'tabLib' },
  { icon: 'tabInfo', gap: true }, { icon: 'tabWeb', gap: true }, { icon: 'tabClock', gap: true },
  { icon: 'tabRoles' }, { icon: 'tabColor' }, { icon: 'tabMat' }, { icon: 'tabPeople' }, { icon: 'tabDoor' }, { icon: 'tabFlow' }
]

const k = '#222'
const modelArt = [
  // left wing
  f('M85 335h33v225l162 10-30 260-218 18z', '#fd1a02'),
  f('M32 848l218-20v97H57z', '#013a02'),
  f('M45 150h75l-7 125H85z', '#560400'),
  f('M85 270h30v65H85z', 'url(#gYellow)'),
  // right wing
  f('M1278 55l77 215-25 180-50 560-45-90 65-370-30-90 25-190z', '#00c40c'),
  p('M1280 60l18 200-22 195', '#e8d820', 4), dash('M1280 60l18 200-22 195', k, 3, '10 14'),
  f('M1165 112l112-5 20 168-104 4z', '#a3159f'),
  f('M1193 279l104-4-22 195-100 6 5-80z', '#fd2bfd'),
  f('M1172 487l88-7 10 40-100 5z', '#560400'),
  f('M1170 525l100-5-45 410h-95z', '#fd1a02'),
  f('M1258 455l18-5 33 95-12 12-25-28z', '#b09a00'),
  p('M1300 555l-48 420', '#f8ee10', 14),
  p('M1275 530l-38 380', '#108818', 8), dash('M1270 525l-40 400', k, 3, '12 10'),
  f('M1222 930l15-5 22 50-20 3z', '#a89200'),
  // top
  f('M50 105l385-17 2 62-317 12-2-12H45z', '#fd2bfd'),
  f('M527 83l458-25 5 67-473 20z', '#fd2bfd'),
  f('M1077 55l201-10 5 62-213 9z', '#fd2bfd'),
  dash('M60 103l370-16M530 81l450-24M1080 53l195-9', k, 2, '30 34'),
  f('M435 90l10 24 75-3-5 56-80 3zM987 60l12 26 70-2-4 54-78 3z', '#e02410'),
  p('M437 92v75h20M988 62v76h16', '#560400', 6),
  f('M448 115h8v28h-8zM1000 88h8v24h-8z', '#f8ee10'),
  f('M120 162l317-12v20l73-2 7-23 473-20v15l75-2 5-23 88-5-13 72-1033 50z', '#fff'),
  f('M437 150l78-3-5 21-73 2zM990 125l76-3-3 15-73 3z', '#c02818'),
  f('M455 155l52-3v13h-52zM1005 127l55-3v12h-55z', '#fff'),
  p('M437 150v20h74l6-25M990 125v15h74l5-24M455 166v-12h52', k, 3),
  f('M112 237l1033-51 5 92-1035 50z', '#e7e7e7'),
  f('M115 328l1035-50-7 132-1038 50z', '#fff'),
  p('M112 237l1033-51M115 328l1040-51', k, 4), p('M120 162l-8 75 3 91-10 132', k, 3), p('M120 162l397-17M517 145l553-30 90-3', k, 2),
  f('M105 460l1038-50 2 42-865 36-5 67H120z', '#454545'),
  p('M105 460l170-8 8 35', k, 2),
  f('M120 555h10v30h-10z', '#f8ee10'), f('M130 560l145-2v18l-135 8z', '#560400'), p('M120 554h70', '#ddd', 4),
  f('M1158 112l10 3 22 120-5 160-18 60 5 45-27-50z', '#dedede'),
  p('M1158 112l-13 75 8 90-10 135 30 88M1170 118l14 65 8 95-10 120', k, 3),
  // front body
  f('M280 488l865-36 30 48-55 383-872 42 22-185z', '#fff'),
  p('M282 488l863-36M280 488l-10 252-22 185', k, 3), p('M255 850l870-42', k, 5),
  f('M1150 455l24 48-44 425-14-40z', '#d8d8d8'), p('M1140 450l32 52-12 60M1116 885l10 30', k, 3),
  f('M248 925l872-40 12 45h93l15 45 40 38-990 49z', '#013a02'),
  p('M248 927l870-43', k, 3),
  f('M332 490l53-2-10 75-13 177h-50z', '#04b012'), f('M345 490h40l-12 72z', '#014a06'), p('M332 490l-20 250h50l13-178-28-60M355 560l-15 178', k, 2),
  // pocket
  p('M490 508l560-28c40 0 55 30 50 75l-10 105c-10 45-25 55-60 57l-560 32c-50 0-72-20-70-60l12-110c8-50 32-68 78-71z', k, 3, '#fff'),
  f('M428 605c-3-55 20-80 67-86l10 60c-30 2-44 10-46 30z', 'url(#gSide)'),
  f('M493 520l540-24c30 0 45 20 48 56l-40 2-541 25z', 'url(#gPocket)'),
  p('M490 508l12 70M412 572h15c5 20 20 32 38 32M400 688h15c0 30 20 50 55 58M425 580l-10 110M430 560c8-25 30-42 65-44M1095 560l-10 100M1065 553c12 4 20 10 35 4', k, 3),
  f('M505 578l560-26-2 163-603 27-2-130c5-20 20-33 47-34z', '#fd2bfd'),
  f('M500 850l60-2-8 25c5 35-50 45-55 5z', '#333'), p('M497 853h30v12', '#999', 4),
  `<ellipse cx="174" cy="424" rx="35" ry="28" fill="url(#gHole)" stroke="#222" stroke-width="3"/>`,
  p('M310 332l108-6-4 44-105 6zM310 332l25 12M418 326l-25 18M309 376l25-14M414 370l-22-10M335 342h58v20h-58z', k, 3), p('M328 350l15-12 12 18 14-18 12 16 16-12M335 358l55-6', '#a81818', 5),
  f('M545 326l130-6 8 38-135 5z', '#d81c10'), f('M555 365l120-6 8 30-20 10-110 3z', '#3a3a3a'), p('M545 330l135-6 12 20v45l-10 8-133 5v-32M605 325v35M550 345l125-5', k, 3),
  f('M1180 405l62-3v60h-65z', '#fff'), p('M1180 412h63', '#555', 12), dot(1210, 444, '#a02020', 9), p('M1243 405v55l-68 3', k, 2),
  f('M1115 690l15 3 3 30 16 40v18l-12-10-14-40z', '#223c50'),
  // highlight ball
  `<clipPath id="ball"><circle cx="635" cy="565" r="108"/></clipPath><g clip-path="url(#ball)">`,
  f('M520 455h230v25H520z', '#5854c0'), f('M520 474h230v42H520z', '#ffee00'), f('M520 514h230v32H520z', '#5b55b0'), f('M520 545h230v34H520z', '#ffee00'), f('M520 578l230-12v115H520z', '#fd1a02'), '</g>',
  p('M635 510v112M580 567h114', k, 9), p('M635 512v108M582 567h110', '#fff', 5),
  p('M595 550c5-15 15-22 27-25M595 582c5 15 15 22 27 25M677 582c-5 15-15 22-27 25', k, 5), p('M595 550c5-15 15-22 27-25M595 582c5 15 15 22 27 25M677 582c-5 15-15 22-27 25', '#fff', 3),
  p('M655 516l36-2v28l-8 6v-24l-18 2z', k, 2, '#fff'),
  // datum plane and axes
  '<path d="M882 592l310-14-25 258-302 17z" fill="#5aa4e8" fill-opacity=".25" stroke="#2f90d8" stroke-width="3"/>',
  p('M1028 715l24-270', '#2e8a30', 9), f('M1035 450l20-62 22 62-20 8z', '#2c9a34'),
  p('M1028 715l-62-170', '#0a1eb0', 11), f('M948 550l2-56 40 42-20 18z', '#0a28a8'),
  p('M1028 715l310-18', '#d8342c', 7), f('M1338 680l72 14-72 20z', '#e04034'),
  f('M1295 1012l148-16v16z', '#d83c34'), f('M1232 895l48 110-10-80z', '#0a28a8'), f('M1283 900l14 15-10 80-8 12z', '#30a860'),
  '<g font-family="Liberation Sans" font-size="40"><text x="1003" y="375" fill="#999">Y</text><text x="962" y="490" fill="#2a58c8">Z</text><text x="1400" y="674" fill="#a83848">X</text><text x="1250" y="880" fill="#0a58a8">ZC</text></g>'
].join('')
</script>

<style>
body {
  background: #000;
}
</style>

<style scoped>
.screen {
  min-height: 100vh;
  padding: 0 186px;
  box-sizing: border-box;
  display: flex;
  background: #000;
  color: #111;
  font: 15px/20px "Liberation Sans", "Noto Sans CJK SC", sans-serif;
}
.defs { position: absolute; }
.window {
  flex: 1;
  min-width: 0;
  display: flex;
  flex-direction: column;
  border-bottom: 5px solid #222;
  background: #ddd;
}
button, select, input { font: inherit; color: inherit; margin: 0; padding: 0; border: 0; background: none; }
h1, h2, h3, p, ul { margin: 0; padding: 0; }
svg { display: block; flex: none; overflow: visible; }
.latin { font-family: "Liberation Mono", monospace; font-size: 12px; }
.grow { flex: 1; }

/* title */
.titlebar {
  height: 37px;
  display: flex;
  align-items: center;
  padding: 0 1px 3px 3px;
  box-sizing: border-box;
  background: linear-gradient(#77797b, #55575a 12px, #1c1c1c 13px, #1c1c1c);
  color: #e8e8e8;
}
.titlebar h1 { flex: 1; margin-left: 6px; font: 16px/24px "Noto Sans", "Noto Sans CJK SC", sans-serif; }
.ico20 { width: 20px; height: 20px; }
.brand { font: bold 17px/20px "Liberation Sans", sans-serif; color: #fff; margin-right: 34px; }
.win-btns, .doc-btns { display: flex; gap: 5px; }
.win-btn {
  width: 22px;
  height: 22px;
  border: 1px solid #777;
  border-radius: 3px;
  background: linear-gradient(#666, #333);
}
.win-btn svg { width: 20px; height: 20px; }
.win-btn.close { background: linear-gradient(#f08a68, #e0481e); border-color: #f0a088; }

/* menu */
.menubar {
  height: 29px;
  display: flex;
  align-items: center;
  padding: 0 5px 0 3px;
  background: linear-gradient(#efefef, #dedede);
  border-top: 1px solid #fff;
  box-sizing: border-box;
}
.menubar ul { flex: 1; display: flex; list-style: none; margin-left: 8px; }
.menubar li { margin-right: 17px; white-space: nowrap; }
.menubar a { color: #111; text-decoration: none; }
.menu-sep { border-left: 1px solid #aaa; padding-left: 11px; margin-left: -4px; }
.doc-btns button { width: 19px; height: 20px; border: 2px solid #8a8a8a; border-radius: 4px; background: #f0f0f0; }
.doc-btns svg { width: 15px; height: 16px; }

/* toolbars */
.grip {
  width: 3px;
  height: 28px;
  margin: 0 3px 0 3px;
  flex: none;
  background: repeating-linear-gradient(#9c9c9c 0 2px, #f4f4f4 2px 4px);
}
.menubar .grip { height: 18px; margin: 0 3px 0 0; }
.toolbars { background: linear-gradient(#e4e4e4, #cbcbcb); border-top: 1px solid #bbb; border-bottom: 1px solid #8c8c8c; }
.tool-row { display: flex; height: 42px; }
.row0 { padding-left: 6px; }
.row0 .tool-group:nth-child(3) { margin-left: 188px; border-left: 1px solid #c2c2c2; }
.tool-group {
  display: flex;
  align-items: center;
  padding-right: 2px;
  border-right: 1px solid #bdbdbd;
  border-bottom: 1px solid #c2c2c2;
  box-shadow: 1px 0 0 #f0f0f0;
  box-sizing: border-box;
}
.tool { width: 39px; height: 38px; flex: none; display: flex; align-items: center; justify-content: center; }
.tool svg { width: 28px; height: 28px; }
.start { width: 84px; display: flex; align-items: center; padding-left: 5px; box-sizing: border-box; }
.start svg { width: 28px; height: 28px; margin-right: 5px; }
.tri { margin-left: 4px; border: 4px solid transparent; border-top: 5px solid #000; border-bottom: 0; }
.sep { width: 1px; height: 38px; margin: 0 2px; flex: none; background: #bbb; box-shadow: 1px 0 0 #f8f8f8; }
.drop { width: 14px; height: 38px; display: flex; align-items: center; justify-content: center; flex: none; }
.drop::after { content: ""; border: 4px solid transparent; border-top: 5px solid #000; border-bottom: 0; }
.drop.low { align-items: flex-end; padding-bottom: 6px; box-sizing: border-box; }
.tool-group .drop:not(.low) { width: 17px; }

/* selection bar */
.selbar {
  height: 42px;
  display: flex;
  align-items: center;
  padding-left: 7px;
  background: linear-gradient(#c2c2c2, #dedede 40%, #dadada);
  border-bottom: 1px solid #b4b4b4;
  box-sizing: border-box;
}
.selbar .tool { width: 38px; }
.selbar .sep { margin: 0 4px; }
.selbar .tool.on svg { width: 26px; height: 26px; border: 2px solid #d84848; }
.selbar .last { margin-left: auto; margin-right: 3px; }
.combo {
  display: flex;
  height: 20px;
  border: 2px solid #858585;
  border-radius: 5px;
  background: #fff;
  overflow: hidden;
  box-sizing: border-box;
  flex: none;
}
.combo select { flex: 1; min-width: 0; appearance: none; line-height: 16px; white-space: nowrap; outline: none; }
.selbar .combo select { height: 16px; }
.c1 { width: 136px; margin-right: 10px; }
.c2 { width: 144px; margin-right: 4px; }
.c3 { margin: 0 7px 0 3px; }
.arrow { width: 20px; flex: none; display: flex; align-items: center; justify-content: center; background: linear-gradient(#d4e8fa, #5a9ade); border-left: 1px solid #3a6ab0; }
.arrow::after { content: ""; border: 6px solid transparent; border-top: 8px solid #0a1420; border-bottom: 0; }
.arrow.small::after { border-width: 6px 5px 0; }

/* cue line */
.cue {
  height: 28px;
  display: flex;
  align-items: center;
  font-weight: bold;
  font-size: 16px;
  background: linear-gradient(#e2e2e2, #d4d4d4);
  border-top: 1px solid #f8f8f8;
  border-bottom: 2px solid #909090;
  box-sizing: border-box;
}
.cue .latin { font-size: 14px; }
.prompt { width: 46%; padding-left: 3px; box-sizing: border-box; white-space: nowrap; }
.status { flex: 1; padding-left: 4px; border-left: 1px solid #b0b0b0; white-space: pre; }
.cell { width: 24px; height: 25px; border-left: 1px solid #b0b0b0; }
.cell.wide { width: 44px; }
.cue-btns { display: flex; gap: 5px; padding: 0 4px 0 3px; border-left: 1px solid #b0b0b0; }
.cue-btns svg { width: 20px; height: 20px; }

/* work area */
.work { flex: 1; display: flex; min-height: 0; height: 768px; }
.viewport {
  flex: 1;
  position: relative;
  overflow: hidden;
  background: linear-gradient(#242252, #1b3b6c 32%, #055f96 78%, #04649b);
}
.model { position: absolute; left: 194px; top: 226px; width: 490px; height: 370px; }
.hint {
  position: absolute;
  left: 466px;
  top: 473px;
  width: 102px;
  height: 22px;
  border: 1px solid #b4bec8;
  border-radius: 6px;
  box-sizing: border-box;
  background: rgba(236, 243, 250, 0.8);
  color: #555;
  text-align: center;
  white-space: pre;
}
.triad { position: absolute; left: 50px; top: 653px; width: 64px; height: 54px; font-family: "Liberation Sans", sans-serif; }

/* dialog */
.dialog {
  position: absolute;
  left: 675px;
  top: 26px;
  width: 360px;
  border-radius: 8px;
  overflow: hidden;
  background: #1c1c1c;
}
.dlg-title {
  display: flex;
  gap: 4px;
  align-items: center;
  height: 29px;
  padding: 0 4px 0 11px;
  background: linear-gradient(#707274, #4a4c4e 9px, #1c1c1c 10px);
}
.dlg-title h2 { flex: 1; padding-top: 3px; font-size: 15px; font-weight: normal; color: #e8e8e8; }
.dlg-body { padding: 5px 6px 8px 8px; margin-bottom: 10px; background: #ebebeb; border: solid #cfcfcf; border-width: 0 1px; }
.sections { border-right: 1px solid #999; }
.dialog h3 { font-size: 16px; line-height: 20px; }
.dialog h3 button {
  display: flex;
  align-items: center;
  justify-content: space-between;
  width: 100%;
  height: 28px;
  padding-left: 7px;
  font-weight: bold;
  background: linear-gradient(#fcfcfc, #f0f0f1 50%, #dcdddf);
  border-bottom: 1px solid #999;
}
.dialog .closed h3 button { height: 29px; }
.fold { display: flex; align-items: center; justify-content: center; width: 28px; height: 27px; border-left: 1px solid #aaa; }
.fold svg { width: 16px; height: 14px; }
.fields {
  display: flex;
  flex-direction: column;
  gap: 5px;
  padding: 8px 12px 12px 9px;
  background: #d3d3d3;
  box-shadow: inset 3px 3px 3px -1px #b0b0b0;
}
.field { display: flex; align-items: center; }
.field.number { height: 22px; }
.pick, .vector { height: 39px; }
.pick { background: linear-gradient(90deg, #e9a761, #e6ad6e 35%, #d3d3d3 70%); border-radius: 6px; }
.star { width: 15px; margin-left: 9px; font-size: 26px; line-height: 26px; height: 20px; font-weight: normal; color: #e02818; }
.paren { margin-left: 10px; font-size: 13px; }
.sketch, .mini { width: 28px; height: 28px; border: 2px solid #2c6c34; border-radius: 4px; background: linear-gradient(#c4e8c0, #5cb05c); margin-right: 4px; }
.sketch svg, .mini svg { width: 24px; height: 24px; }
.mini { border-color: #bbb; background: #e8e8e8; }
.mini.dark { border-color: #777; background: linear-gradient(#fff, #d8d8d8); }
.curve-btn { width: 38px; height: 38px; border: 2px solid #b46a38; border-radius: 5px; background: linear-gradient(#ffe0c4, #ff9a58); }
.curve-btn svg { width: 30px; height: 30px; margin: 2px; }
.vec { display: flex; width: 58px; height: 37px; border: 2px solid #7c7c7c; border-radius: 5px; background: linear-gradient(#fafafa, #b8b8b8); overflow: hidden; }
.vec svg { width: 34px; height: 33px; }
.combo.big, .combo.num { width: 132px; height: 30px; }
.combo.big { align-items: stretch; }
.combo.big svg { width: 18px; height: 18px; margin: 4px 6px 0 5px; }
.combo.big select { line-height: 24px; }
.combo.num { height: 22px; background: #d4d4d4; }
.combo.num input { width: 66px; box-sizing: border-box; padding-left: 2px; background: #fff; font-size: 14px; line-height: 18px; outline: none; }
.unit { flex: 1; padding-left: 5px; font: 12px/20px "Liberation Mono", monospace; }
.down { width: 21px; background: linear-gradient(#d4e8fa, #4a8ad4); border-left: 1px solid #3a6ab0; }
.down svg { width: 18px; height: 18px; margin: 0 1px; }
.dlg-actions { display: flex; justify-content: flex-end; gap: 9px; margin: 4px 2px 0 0; padding: 6px 11px 0 0; border-top: 1px solid #aaa; }
.dlg-actions button { width: 80px; height: 23px; line-height: 18px; border: 2px solid #6c6c6c; border-radius: 5px; background: linear-gradient(#fff, #d4d4d4); }
.dlg-actions button:disabled { color: #999; border-color: #bcbcbc; background: #ececec; }

/* navigator */
.navigator {
  width: 404px;
  display: flex;
  flex-direction: column;
  padding: 0 12px;
  box-sizing: border-box;
  background: #ebebeb;
  border-left: 1px solid #f8f8f8;
  flex: none;
}
.nav-head { display: flex; align-items: center; justify-content: space-between; height: 43px; padding: 6px 6px 0 5px; box-sizing: border-box; }
.nav-head h2 { font-size: 16px; }
.nav-head svg { width: 14px; height: 14px; }
.tree-frame { flex: 1; min-height: 0; display: flex; flex-direction: column; border: 1px solid #777; }
.tree-top { flex: 1; min-height: 0; display: flex; overflow: hidden; }
.tree-clip { flex: 1; overflow: hidden; height: 680px; }
table { width: 100%; border-collapse: collapse; table-layout: fixed; }
th, td { padding: 0; text-align: left; font-weight: normal; border-right: 1px solid #d8d8d8; }
th { height: 20px; line-height: 19px; background: linear-gradient(#fafafa, #dcdcdc); border-bottom: 1px solid #aaa; padding-left: 8px; border-right-color: #aaa; }
th:last-child, td:last-child { border-right: 0; }
th.name { width: 241px; }
.sort { display: inline-block; margin: 0 0 3px 19px; border: 6px solid transparent; border-bottom: 7px solid #111; border-top: 0; }
td { height: 24px; border-bottom: 1px solid #e2e2e2; color: #999; background: #fff; white-space: nowrap; }
tr:nth-child(odd) td { background: #f5f5f5; }
td.root { color: #444; display: flex; align-items: center; padding-left: 6px; }
.minus { width: 12px; height: 12px; border: 1px solid #888; border-radius: 2px; background: #fff; display: flex; align-items: center; justify-content: center; }
.minus::before { content: ""; width: 6px; border-top: 1px solid #222; }
.folder { width: 21px; height: 21px; margin: 0 3px 0 6px; }
.node { display: flex; align-items: center; height: 24px; margin-left: 36px; border-left: 1px dotted #999; }
.node::before { content: ""; width: 10px; border-top: 1px dotted #999; margin-right: 4px; }
.node input { appearance: none; width: 16px; height: 16px; border: 2px solid #111; background: #fff; box-sizing: border-box; flex: none; }
.node input:checked::after { content: ""; display: block; width: 12px; height: 12px; background: #1a9c38; clip-path: polygon(0 40%, 35% 60%, 100% 0, 100% 35%, 35% 100%, 0 70%); }
.node svg { width: 20px; height: 20px; margin: 0 4px 0 1px; }
.node .latin { margin-left: 9px; font-size: 13px; }
.vscroll { width: 20px; display: flex; flex-direction: column; align-items: center; background: #efefef; }
.cap { width: 100%; height: 20px; flex: none; background: linear-gradient(#fafafa, #dcdcdc); border-bottom: 1px solid #aaa; }
.up, .dn, .lf, .rt { border: 5px solid transparent; flex: none; }
.up { margin-top: 9px; border-bottom-color: #444; border-top: 0; }
.dn { margin-top: auto; margin-bottom: 9px; border-top-color: #444; border-bottom: 0; }
.vscroll .thumb { width: 18px; height: 232px; margin-top: 54px; box-sizing: border-box; border: 1px solid #999; background: repeating-linear-gradient(#666 0 1px, transparent 1px 4px) center / 9px 10px no-repeat, linear-gradient(90deg, #fff, #bdbdbd); }
.hscroll { display: flex; align-items: center; height: 20px; background: #efefef; }
.lf { margin: 0 11px 0 7px; border-right-color: #444; border-left: 0; }
.rt { margin: 0 28px 0 28px; border-left-color: #444; border-right: 0; }
.hscroll .thumb { flex: 1; height: 18px; box-sizing: border-box; border: 1px solid #999; background: repeating-linear-gradient(90deg, #666 0 1px, transparent 1px 4px) center / 10px 9px no-repeat, linear-gradient(#fff, #bdbdbd); }
.splitter { height: 22px; display: flex; align-items: flex-start; padding-top: 5px; box-sizing: border-box; }
.splitter::before, .splitter::after { content: ""; flex: 1; border-top: 1px solid #bbb; margin: 3px 0 0; }
.splitter i { width: 66px; height: 8px; margin: 0 5px; background: #d0d0d0; border: solid #999; border-width: 0 1px 1px 0; box-sizing: border-box; }

/* resource tabs */
.tabs { width: 39px; padding: 21px 6px 0 0; box-sizing: border-box; background: #a9a9a9; border-left: 1px solid #888; display: flex; flex-direction: column; gap: 2px; }
.tabs button { width: 32px; height: 50px; flex: none; display: flex; align-items: center; justify-content: center; border: 1px solid #777; border-left: 0; border-radius: 0 4px 4px 0; background: linear-gradient(90deg, #d0d0d0, #e4e4e4); box-sizing: border-box; }
.tabs svg { width: 28px; height: 28px; }
.tabs .active { width: 35px; height: 54px; margin: -2px 0 -1px -1px; background: #ebebeb; }
.tabs .gap { margin-top: 15px; }

.bottombar { height: 43px; display: flex; background: linear-gradient(#e8e8e8, #cfcfcf); border-top: 1px solid #888; box-sizing: border-box; }
.bottombar .tool { width: 38px; }
.bottombar .sep { margin: 0 4px; }
</style>
